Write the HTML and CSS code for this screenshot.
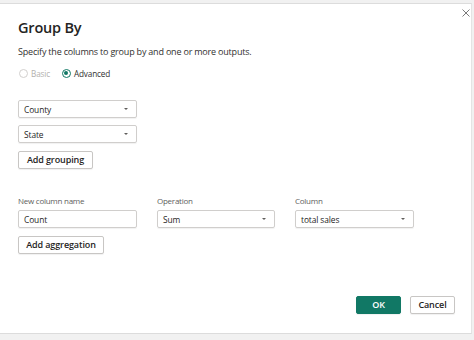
FILE: index.html
```html
<!DOCTYPE html>
<html>
<head>
<meta charset="utf-8">
<link rel="stylesheet" href="styles.css">
</head>
<body>
<div class="dialog">
  <button class="close" aria-label="Close">
    <svg width="8" height="8" viewBox="0 0 8 8"><path d="M0.5 0.5L7.5 7.5M7.5 0.5L0.5 7.5" stroke="#7a7a7a" stroke-width="1" fill="none"/></svg>
  </button>
  <h1 class="title">Group By</h1>
  <p class="subtitle">Specify the columns to group by and one or more outputs.</p>
  <div class="radios">
    <label class="radio disabled"><span class="dot"></span>Basic</label>
    <label class="radio checked"><span class="dot"></span>Advanced</label>
  </div>
  <div class="groupings">
    <div class="select w1"><span>County</span><i class="caret"></i></div>
    <div class="select w1"><span>State</span><i class="caret"></i></div>
    <button class="btn add-group">Add grouping</button>
  </div>
  <div class="agg">
    <div class="field">
      <div class="label">New column name</div>
      <div class="select"><span>Count</span></div>
    </div>
    <div class="field">
      <div class="label">Operation</div>
      <div class="select"><span>Sum</span><i class="caret"></i></div>
    </div>
    <div class="field">
      <div class="label">Column</div>
      <div class="select"><span>total sales</span><i class="caret"></i></div>
    </div>
  </div>
  <button class="btn add-agg">Add aggregation</button>
  <div class="footer">
    <button class="btn primary">OK</button>
    <button class="btn cancel">Cancel</button>
  </div>
</div>
</body>
</html>
```
FILE: styles.css
```css
html, body {
  margin: 0;
  padding: 0;
}
body {
  width: 474px;
  height: 340px;
  background: #f1f1f1;
  font-family: "Open Sans", "Noto Sans", sans-serif;
  color: #252423;
  overflow: hidden;
}
.dialog {
  position: relative;
  box-sizing: border-box;
  margin-top: 3px;
  width: 472px;
  height: 331px;
  background: #fff;
  border-top: 1px solid #dcdcdc;
  border-bottom: 1px solid #dcdcdc;
  border-right: 1px solid #e4e4e4;
  padding: 12px 18px 19px 18px;
  display: flex;
  flex-direction: column;
}
.close {
  position: absolute;
  top: 5px;
  right: 1px;
  border: 0;
  background: none;
  padding: 0;
  width: 8px;
  height: 8px;
  display: flex;
}
.title {
  margin: 0;
  font-size: 14.5px;
  font-weight: 600;
  letter-spacing: -0.2px;
  line-height: 24px;
  color: #252423;
}
.subtitle {
  margin: 5px 0 0;
  font-size: 9px;
  letter-spacing: -0.2px;
  line-height: 14px;
  color: #323130;
}
.radios {
  margin-top: 7px;
  display: flex;
  gap: 11px;
  height: 14px;
  align-items: center;
}
.radio {
  display: flex;
  align-items: center;
  gap: 3px;
  font-size: 8.2px;
  letter-spacing: -0.15px;
  color: #323130;
}
.radio .dot {
  box-sizing: border-box;
  width: 9px;
  height: 9px;
  border-radius: 50%;
  border: 1px solid #8a8886;
  position: relative;
  margin-left: 1px;
}
.radio.disabled {
  color: #b3b0ad;
}
.radio.disabled .dot {
  border-color: #d2d0ce;
}
.radio.checked .dot {
  border-color: #117865;
}
.radio.checked .dot::after {
  content: "";
  position: absolute;
  left: 1.5px;
  top: 1.5px;
  width: 4px;
  height: 4px;
  border-radius: 50%;
  background: #117865;
}
.groupings {
  margin-top: 20px;
  display: flex;
  flex-direction: column;
  align-items: flex-start;
  gap: 7px;
}
.select {
  box-sizing: border-box;
  height: 18px;
  border: 1px solid #d0cecc;
  border-radius: 2px;
  box-shadow: 0 1px 1px rgba(0, 0, 0, 0.06);
  display: flex;
  align-items: center;
  justify-content: space-between;
  padding: 0 8px 0 5px;
  font-size: 8.4px;
  letter-spacing: -0.1px;
  color: #252423;
}
.w1 {
  width: 119px;
}
.caret {
  width: 0;
  height: 0;
  border-left: 2px solid transparent;
  border-right: 2px solid transparent;
  border-top: 2px solid #605e5c;
}
.btn {
  box-sizing: border-box;
  height: 18px;
  border: 1px solid #c8c6c4;
  border-radius: 2px;
  background: #fff;
  box-shadow: 0 1px 1px rgba(0, 0, 0, 0.06);
  font-family: inherit;
  font-size: 9px;
  font-weight: 600;
  letter-spacing: -0.1px;
  color: #252423;
  padding: 0;
  line-height: 16px;
  white-space: nowrap;
  text-align: center;
}
.add-group {
  margin-top: 1px;
  width: 75px;
}
.agg {
  margin-top: 25px;
  display: grid;
  grid-template-columns: 119px 118px 119px;
  column-gap: 20px;
}
.field {
  display: flex;
  flex-direction: column;
  gap: 2px;
}
.label {
  font-size: 8px;
  letter-spacing: -0.25px;
  line-height: 14px;
  color: #605e5c;
}
.add-agg {
  margin-top: 8px;
  align-self: flex-start;
  width: 86px;
}
.footer {
  margin-top: auto;
  display: flex;
  justify-content: flex-end;
  gap: 9px;
}
.footer .btn {
  width: 45px;
}
.primary {
  background: #117865;
  border-color: #117865;
  color: #fff;
}
.cancel {
  margin-right: -2px;
}
```
